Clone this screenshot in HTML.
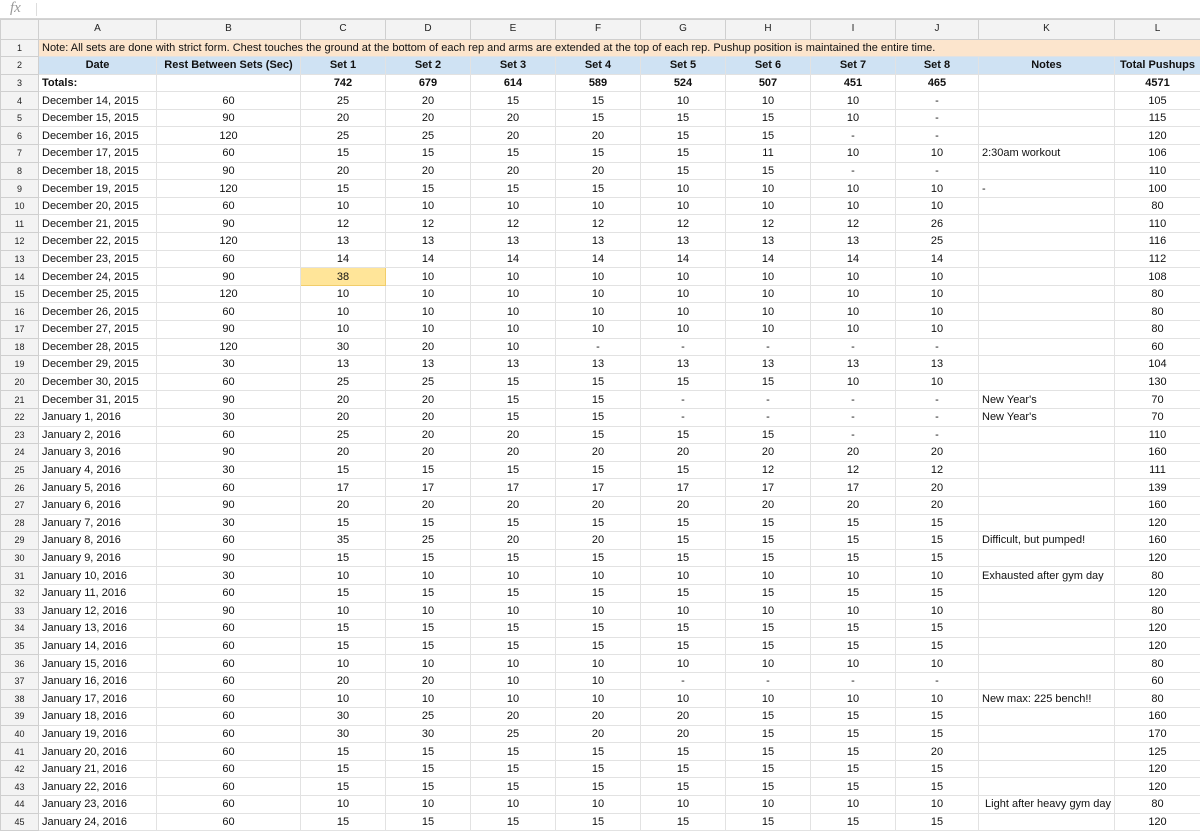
<!DOCTYPE html>
<html><head><meta charset="utf-8"><style>
html,body{margin:0;padding:0;background:#fff;width:1200px;height:833px;overflow:hidden}
#fb{position:absolute;left:0;top:0;width:1200px;height:18px;border-bottom:1px solid #d4d4d4;background:#fff}
#fx{position:absolute;left:10px;top:0px;font:italic 15px "Liberation Serif",serif;color:#999}
#sep{position:absolute;left:36px;top:3px;width:1px;height:13px;background:#ddd}
table{position:absolute;left:0;top:19px;border-collapse:collapse;table-layout:fixed;width:1200px}
td{height:16.6px;padding:0 3px;border:1px solid #e2e2e2;font:11px "Liberation Sans",Arial,sans-serif;color:#111;white-space:nowrap;overflow:hidden;text-align:center;line-height:16px}
tr.h td{background:#f3f3f3;border-color:#cfcfcf;height:18.5px;font-size:10px;color:#222}
td.n{background:#f3f3f3;border-color:#cfcfcf;font-size:9px;color:#222}
td.l{text-align:left}
tr.o td{background:#fce5cd}
tr.b td{background:#cfe2f3;font-weight:bold}
tr.t td{font-weight:bold}
tr.o td.n,tr.b td.n,tr.t td.n{background:#f3f3f3;font-weight:normal}
td.y{background:#ffe599;border-color:#f1cd6a}
</style></head><body>
<div id="fb"><span id="fx">fx</span><div id="sep"></div></div>
<table>
<colgroup><col style="width:38px"><col style="width:118px"><col style="width:144px"><col style="width:85px"><col style="width:85px"><col style="width:85px"><col style="width:85px"><col style="width:85px"><col style="width:85px"><col style="width:85px"><col style="width:83px"><col style="width:136px"><col style="width:86px"></colgroup>
<tr class="h"><td></td><td>A</td><td>B</td><td>C</td><td>D</td><td>E</td><td>F</td><td>G</td><td>H</td><td>I</td><td>J</td><td>K</td><td>L</td></tr>
<tr class="o"><td class="n">1</td><td class="l" colspan="12">Note: All sets are done with strict form. Chest touches the ground at the bottom of each rep and arms are extended at the top of each rep. Pushup position is maintained the entire time.</td></tr>
<tr class="b"><td class="n">2</td><td>Date</td><td>Rest Between Sets (Sec)</td><td>Set 1</td><td>Set 2</td><td>Set 3</td><td>Set 4</td><td>Set 5</td><td>Set 6</td><td>Set 7</td><td>Set 8</td><td>Notes</td><td>Total Pushups</td></tr>
<tr class="t"><td class="n">3</td><td class="l">Totals:</td><td></td><td>742</td><td>679</td><td>614</td><td>589</td><td>524</td><td>507</td><td>451</td><td>465</td><td></td><td>4571</td></tr>
<tr><td class="n">4</td><td class="l">December 14, 2015</td><td>60</td><td>25</td><td>20</td><td>15</td><td>15</td><td>10</td><td>10</td><td>10</td><td>-</td><td class="l"></td><td>105</td></tr>
<tr><td class="n">5</td><td class="l">December 15, 2015</td><td>90</td><td>20</td><td>20</td><td>20</td><td>15</td><td>15</td><td>15</td><td>10</td><td>-</td><td class="l"></td><td>115</td></tr>
<tr><td class="n">6</td><td class="l">December 16, 2015</td><td>120</td><td>25</td><td>25</td><td>20</td><td>20</td><td>15</td><td>15</td><td>-</td><td>-</td><td class="l"></td><td>120</td></tr>
<tr><td class="n">7</td><td class="l">December 17, 2015</td><td>60</td><td>15</td><td>15</td><td>15</td><td>15</td><td>15</td><td>11</td><td>10</td><td>10</td><td class="l">2:30am workout</td><td>106</td></tr>
<tr><td class="n">8</td><td class="l">December 18, 2015</td><td>90</td><td>20</td><td>20</td><td>20</td><td>20</td><td>15</td><td>15</td><td>-</td><td>-</td><td class="l"></td><td>110</td></tr>
<tr><td class="n">9</td><td class="l">December 19, 2015</td><td>120</td><td>15</td><td>15</td><td>15</td><td>15</td><td>10</td><td>10</td><td>10</td><td>10</td><td class="l">-</td><td>100</td></tr>
<tr><td class="n">10</td><td class="l">December 20, 2015</td><td>60</td><td>10</td><td>10</td><td>10</td><td>10</td><td>10</td><td>10</td><td>10</td><td>10</td><td class="l"></td><td>80</td></tr>
<tr><td class="n">11</td><td class="l">December 21, 2015</td><td>90</td><td>12</td><td>12</td><td>12</td><td>12</td><td>12</td><td>12</td><td>12</td><td>26</td><td class="l"></td><td>110</td></tr>
<tr><td class="n">12</td><td class="l">December 22, 2015</td><td>120</td><td>13</td><td>13</td><td>13</td><td>13</td><td>13</td><td>13</td><td>13</td><td>25</td><td class="l"></td><td>116</td></tr>
<tr><td class="n">13</td><td class="l">December 23, 2015</td><td>60</td><td>14</td><td>14</td><td>14</td><td>14</td><td>14</td><td>14</td><td>14</td><td>14</td><td class="l"></td><td>112</td></tr>
<tr><td class="n">14</td><td class="l">December 24, 2015</td><td>90</td><td class="y">38</td><td>10</td><td>10</td><td>10</td><td>10</td><td>10</td><td>10</td><td>10</td><td class="l"></td><td>108</td></tr>
<tr><td class="n">15</td><td class="l">December 25, 2015</td><td>120</td><td>10</td><td>10</td><td>10</td><td>10</td><td>10</td><td>10</td><td>10</td><td>10</td><td class="l"></td><td>80</td></tr>
<tr><td class="n">16</td><td class="l">December 26, 2015</td><td>60</td><td>10</td><td>10</td><td>10</td><td>10</td><td>10</td><td>10</td><td>10</td><td>10</td><td class="l"></td><td>80</td></tr>
<tr><td class="n">17</td><td class="l">December 27, 2015</td><td>90</td><td>10</td><td>10</td><td>10</td><td>10</td><td>10</td><td>10</td><td>10</td><td>10</td><td class="l"></td><td>80</td></tr>
<tr><td class="n">18</td><td class="l">December 28, 2015</td><td>120</td><td>30</td><td>20</td><td>10</td><td>-</td><td>-</td><td>-</td><td>-</td><td>-</td><td class="l"></td><td>60</td></tr>
<tr><td class="n">19</td><td class="l">December 29, 2015</td><td>30</td><td>13</td><td>13</td><td>13</td><td>13</td><td>13</td><td>13</td><td>13</td><td>13</td><td class="l"></td><td>104</td></tr>
<tr><td class="n">20</td><td class="l">December 30, 2015</td><td>60</td><td>25</td><td>25</td><td>15</td><td>15</td><td>15</td><td>15</td><td>10</td><td>10</td><td class="l"></td><td>130</td></tr>
<tr><td class="n">21</td><td class="l">December 31, 2015</td><td>90</td><td>20</td><td>20</td><td>15</td><td>15</td><td>-</td><td>-</td><td>-</td><td>-</td><td class="l">New Year's</td><td>70</td></tr>
<tr><td class="n">22</td><td class="l">January 1, 2016</td><td>30</td><td>20</td><td>20</td><td>15</td><td>15</td><td>-</td><td>-</td><td>-</td><td>-</td><td class="l">New Year's</td><td>70</td></tr>
<tr><td class="n">23</td><td class="l">January 2, 2016</td><td>60</td><td>25</td><td>20</td><td>20</td><td>15</td><td>15</td><td>15</td><td>-</td><td>-</td><td class="l"></td><td>110</td></tr>
<tr><td class="n">24</td><td class="l">January 3, 2016</td><td>90</td><td>20</td><td>20</td><td>20</td><td>20</td><td>20</td><td>20</td><td>20</td><td>20</td><td class="l"></td><td>160</td></tr>
<tr><td class="n">25</td><td class="l">January 4, 2016</td><td>30</td><td>15</td><td>15</td><td>15</td><td>15</td><td>15</td><td>12</td><td>12</td><td>12</td><td class="l"></td><td>111</td></tr>
<tr><td class="n">26</td><td class="l">January 5, 2016</td><td>60</td><td>17</td><td>17</td><td>17</td><td>17</td><td>17</td><td>17</td><td>17</td><td>20</td><td class="l"></td><td>139</td></tr>
<tr><td class="n">27</td><td class="l">January 6, 2016</td><td>90</td><td>20</td><td>20</td><td>20</td><td>20</td><td>20</td><td>20</td><td>20</td><td>20</td><td class="l"></td><td>160</td></tr>
<tr><td class="n">28</td><td class="l">January 7, 2016</td><td>30</td><td>15</td><td>15</td><td>15</td><td>15</td><td>15</td><td>15</td><td>15</td><td>15</td><td class="l"></td><td>120</td></tr>
<tr><td class="n">29</td><td class="l">January 8, 2016</td><td>60</td><td>35</td><td>25</td><td>20</td><td>20</td><td>15</td><td>15</td><td>15</td><td>15</td><td class="l">Difficult, but pumped!</td><td>160</td></tr>
<tr><td class="n">30</td><td class="l">January 9, 2016</td><td>90</td><td>15</td><td>15</td><td>15</td><td>15</td><td>15</td><td>15</td><td>15</td><td>15</td><td class="l"></td><td>120</td></tr>
<tr><td class="n">31</td><td class="l">January 10, 2016</td><td>30</td><td>10</td><td>10</td><td>10</td><td>10</td><td>10</td><td>10</td><td>10</td><td>10</td><td class="l">Exhausted after gym day</td><td>80</td></tr>
<tr><td class="n">32</td><td class="l">January 11, 2016</td><td>60</td><td>15</td><td>15</td><td>15</td><td>15</td><td>15</td><td>15</td><td>15</td><td>15</td><td class="l"></td><td>120</td></tr>
<tr><td class="n">33</td><td class="l">January 12, 2016</td><td>90</td><td>10</td><td>10</td><td>10</td><td>10</td><td>10</td><td>10</td><td>10</td><td>10</td><td class="l"></td><td>80</td></tr>
<tr><td class="n">34</td><td class="l">January 13, 2016</td><td>60</td><td>15</td><td>15</td><td>15</td><td>15</td><td>15</td><td>15</td><td>15</td><td>15</td><td class="l"></td><td>120</td></tr>
<tr><td class="n">35</td><td class="l">January 14, 2016</td><td>60</td><td>15</td><td>15</td><td>15</td><td>15</td><td>15</td><td>15</td><td>15</td><td>15</td><td class="l"></td><td>120</td></tr>
<tr><td class="n">36</td><td class="l">January 15, 2016</td><td>60</td><td>10</td><td>10</td><td>10</td><td>10</td><td>10</td><td>10</td><td>10</td><td>10</td><td class="l"></td><td>80</td></tr>
<tr><td class="n">37</td><td class="l">January 16, 2016</td><td>60</td><td>20</td><td>20</td><td>10</td><td>10</td><td>-</td><td>-</td><td>-</td><td>-</td><td class="l"></td><td>60</td></tr>
<tr><td class="n">38</td><td class="l">January 17, 2016</td><td>60</td><td>10</td><td>10</td><td>10</td><td>10</td><td>10</td><td>10</td><td>10</td><td>10</td><td class="l">New max: 225 bench!!</td><td>80</td></tr>
<tr><td class="n">39</td><td class="l">January 18, 2016</td><td>60</td><td>30</td><td>25</td><td>20</td><td>20</td><td>20</td><td>15</td><td>15</td><td>15</td><td class="l"></td><td>160</td></tr>
<tr><td class="n">40</td><td class="l">January 19, 2016</td><td>60</td><td>30</td><td>30</td><td>25</td><td>20</td><td>20</td><td>15</td><td>15</td><td>15</td><td class="l"></td><td>170</td></tr>
<tr><td class="n">41</td><td class="l">January 20, 2016</td><td>60</td><td>15</td><td>15</td><td>15</td><td>15</td><td>15</td><td>15</td><td>15</td><td>20</td><td class="l"></td><td>125</td></tr>
<tr><td class="n">42</td><td class="l">January 21, 2016</td><td>60</td><td>15</td><td>15</td><td>15</td><td>15</td><td>15</td><td>15</td><td>15</td><td>15</td><td class="l"></td><td>120</td></tr>
<tr><td class="n">43</td><td class="l">January 22, 2016</td><td>60</td><td>15</td><td>15</td><td>15</td><td>15</td><td>15</td><td>15</td><td>15</td><td>15</td><td class="l"></td><td>120</td></tr>
<tr><td class="n">44</td><td class="l">January 23, 2016</td><td>60</td><td>10</td><td>10</td><td>10</td><td>10</td><td>10</td><td>10</td><td>10</td><td>10</td><td class="l">&nbsp;Light after heavy gym day</td><td>80</td></tr>
<tr><td class="n">45</td><td class="l">January 24, 2016</td><td>60</td><td>15</td><td>15</td><td>15</td><td>15</td><td>15</td><td>15</td><td>15</td><td>15</td><td class="l"></td><td>120</td></tr>
</table>
</body></html>
